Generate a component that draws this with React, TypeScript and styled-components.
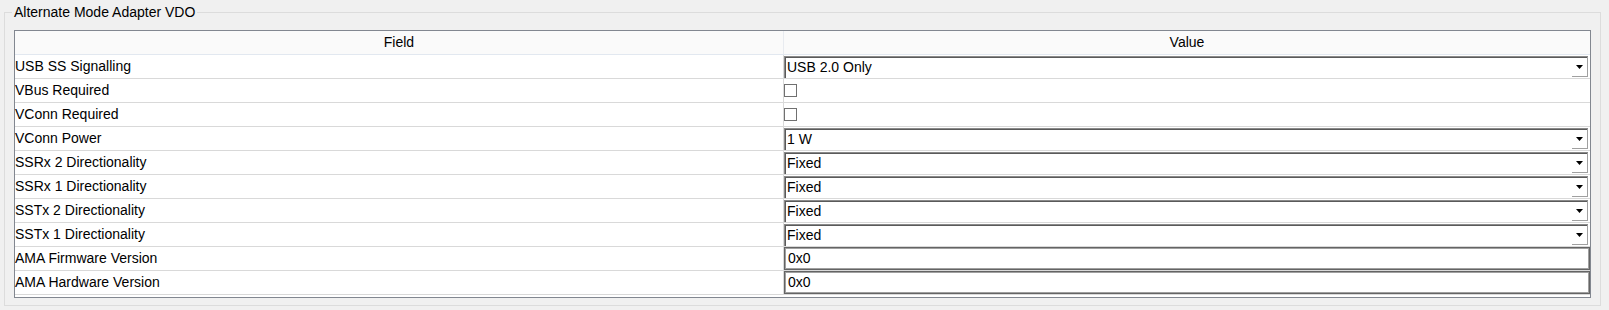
import styled, { createGlobalStyle } from 'styled-components';

const GlobalStyle = createGlobalStyle`
  html, body {
    margin: 0;
    background: #f0f0f0;
    font-family: "Liberation Sans", Arial, sans-serif;
    font-size: 14px;
    color: #000000;
  }
`;

const Group = styled.fieldset`
  margin: 4px 8px 0 4px;
  padding: 10px 9px 7px;
  border: 1px solid #dcdcdc;
  min-width: 0;
`;

const Legend = styled.legend`
  margin-left: -2px;
  padding: 0 2px;
  line-height: 16px;
`;

const Table = styled.div`
  border: 1px solid #828790;
  background: #ffffff;
  padding-bottom: 2px;
`;

const Row = styled.div<{ $header?: boolean }>`
  display: grid;
  grid-template-columns: 769px 1fr;
  height: 24px;
  box-sizing: border-box;
  border-bottom: 1px solid ${(p) => (p.$header ? '#e2e8f0' : '#d9d9d9')};
  background: ${(p) => (p.$header ? '#fafafa' : '#ffffff')};
`;

const HeadCell = styled.div`
  display: flex;
  align-items: center;
  justify-content: center;
  padding-bottom: 1px;
  border-right: 1px solid #e8ebf0;
  &:last-child {
    border-right: none;
  }
`;

const FieldCell = styled.div`
  display: flex;
  align-items: center;
  box-sizing: border-box;
  padding-bottom: 1px;
  border-right: 1px solid #d9d9d9;
  white-space: nowrap;
`;

const ValueCell = styled.div`
  display: flex;
  align-items: center;
  min-width: 0;
`;

const Combo = styled.div`
  box-sizing: border-box;
  align-self: start;
  margin: 1px 2px 0 0;
  height: 22px;
  width: calc(100% - 2px);
  display: flex;
  align-items: center;
  padding: 0 0 1px 2px;
  border-top: 1px solid #8a8a8a;
  border-left: 1px solid #8a8a8a;
  box-shadow: inset 1px 1px 0 #5a5a5a;
  background: #ffffff;
`;

const ComboButton = styled.div`
  margin-left: auto;
  width: 16px;
  height: 20px;
  box-sizing: border-box;
  display: flex;
  align-items: center;
  justify-content: center;
  border-right: 1px solid #a0a0a0;
  border-bottom: 1px solid #a0a0a0;
`;

const CheckBox = styled.div`
  width: 13px;
  height: 13px;
  box-sizing: border-box;
  border: 1px solid #707070;
  background: #ffffff;
`;

const TextBox = styled.div`
  box-sizing: border-box;
  width: 100%;
  height: 23px;
  display: flex;
  align-items: center;
  padding: 0 0 1px 3px;
  border: 1px solid #646464;
  box-shadow: inset 1px 1px 0 #a0a0a0, inset -1px -1px 0 #a0a0a0;
`;

type Kind = 'combo' | 'check' | 'text';

const rows: { field: string; kind: Kind; value?: string }[] = [
  { field: 'USB SS Signalling', kind: 'combo', value: 'USB 2.0 Only' },
  { field: 'VBus Required', kind: 'check' },
  { field: 'VConn Required', kind: 'check' },
  { field: 'VConn Power', kind: 'combo', value: '1 W' },
  { field: 'SSRx 2 Directionality', kind: 'combo', value: 'Fixed' },
  { field: 'SSRx 1 Directionality', kind: 'combo', value: 'Fixed' },
  { field: 'SSTx 2 Directionality', kind: 'combo', value: 'Fixed' },
  { field: 'SSTx 1 Directionality', kind: 'combo', value: 'Fixed' },
  { field: 'AMA Firmware Version', kind: 'text', value: '0x0' },
  { field: 'AMA Hardware Version', kind: 'text', value: '0x0' },
];

function renderValue(kind: Kind, value?: string) {
  if (kind === 'check') return <CheckBox />;
  if (kind === 'text') return <TextBox>{value}</TextBox>;
  return (
    <Combo>
      {value}
      <ComboButton>
        <svg width="7" height="4" viewBox="0 0 7 4">
          <polygon points="0,0 7,0 3.5,4" fill="#000" />
        </svg>
      </ComboButton>
    </Combo>
  );
}

export default function App() {
  return (
    <>
      <GlobalStyle />
      <Group>
        <Legend>Alternate Mode Adapter VDO</Legend>
        <Table>
          <Row $header>
            <HeadCell>Field</HeadCell>
            <HeadCell>Value</HeadCell>
          </Row>
          {rows.map((r) => (
            <Row key={r.field}>
              <FieldCell>{r.field}</FieldCell>
              <ValueCell>{renderValue(r.kind, r.value)}</ValueCell>
            </Row>
          ))}
        </Table>
      </Group>
    </>
  );
}
